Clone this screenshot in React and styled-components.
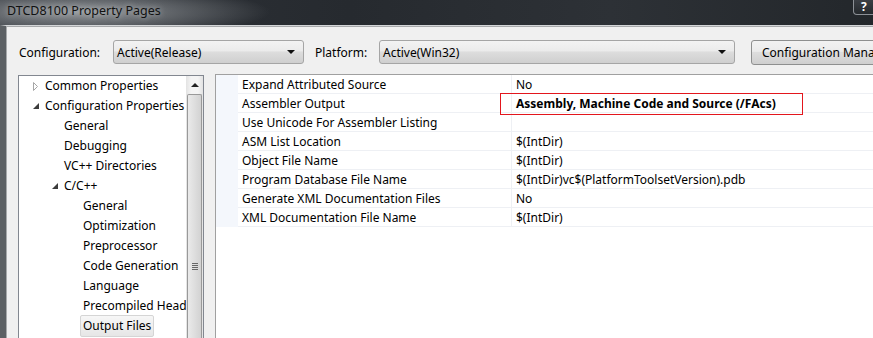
import styled, { createGlobalStyle } from "styled-components";

const GlobalStyle = createGlobalStyle`
    html, body {
        margin: 0;
        padding: 0;
        overflow: hidden;
        background: #f0f0f0;
    }
    body {
        font-family: "Noto Sans", "Liberation Sans", sans-serif;
        font-size: 12px;
        color: #000;
    }
`;

const Window = styled.div`
    width: 873px;
    height: 338px;
    display: flex;
    flex-direction: column;
    overflow: hidden;
`;

const TitleBar = styled.div`
    height: 25px;
    flex: none;
    display: flex;
    align-items: flex-start;
    justify-content: space-between;
    background:
        radial-gradient(ellipse 190px 26px at 80px 12px, rgba(150, 154, 158, 0.95), rgba(150, 154, 158, 0) 100%),
        linear-gradient(to right, #30343a 0%, #262a2f 40%, #2d3136 70%, #23272b 100%);
    overflow: hidden;
`;

const Title = styled.div`
    padding: 2px 0 0 7px;
    font-size: 12.5px;
    color: #111;
    text-shadow: 0 0 6px rgba(220, 222, 224, 0.8);
`;

const HelpButton = styled.div`
    width: 26px;
    height: 15px;
    margin-right: -6px;
    border: 1px solid #8c9096;
    border-top: none;
    border-radius: 0 0 0 4px;
    background: linear-gradient(#3a3e44, #25292d);
    color: #fff;
    font-weight: bold;
    font-size: 12px;
    line-height: 14px;
    padding-left: 7px;
    box-sizing: border-box;
`;

const Frame = styled.div`
    flex: 1;
    display: flex;
    border-top: 1px solid #d4d6d8;
    border-left: 6px solid #5c6064;
`;

const Client = styled.div`
    flex: 1;
    display: flex;
    flex-direction: column;
    background: #f0f0f0;
    border-top: 1px solid #a7a9ab;
    border-left: 1px solid #a7a9ab;
    padding: 13px 0 0 11px;
    min-width: 0;
`;

const TopRow = styled.div`
    display: flex;
    align-items: center;
    height: 24px;
`;

const Label = styled.div`
    width: ${(p) => p.$w}px;
    flex: none;
    padding-left: 1px;
`;

const Combo = styled.div`
    width: ${(p) => p.$w}px;
    flex: none;
    height: 24px;
    box-sizing: border-box;
    border: 1px solid #a5a5a5;
    border-radius: 3px;
    background: linear-gradient(#f3f3f3 0%, #ebebeb 45%, #dddddd 50%, #cfcfcf 100%);
    display: flex;
    align-items: center;
    justify-content: space-between;
    padding: 0 8px 0 3px;
`;

const Arrow = styled.span`
    width: 0;
    height: 0;
    border-left: 4px solid transparent;
    border-right: 4px solid transparent;
    border-top: 4px solid #111;
`;

const Button = styled.div`
    margin-left: ${(p) => p.$gap}px;
    width: 140px;
    flex: none;
    height: 25px;
    box-sizing: border-box;
    border: 1px solid #8e8f8f;
    border-radius: 3px;
    background: linear-gradient(#f2f2f2 0%, #ebebeb 45%, #dddddd 50%, #cfcfcf 100%);
    display: flex;
    align-items: center;
    padding-left: 10px;
    white-space: nowrap;
`;

const Main = styled.div`
    flex: 1;
    display: flex;
    margin-top: 11px;
    min-height: 0;
`;

const TreePanel = styled.div`
    width: 186px;
    flex: none;
    box-sizing: border-box;
    border: 1px solid #828790;
    border-bottom: none;
    background: #fff;
    display: flex;
`;

const TreeList = styled.div`
    flex: 1;
    min-width: 0;
    overflow: hidden;
`;

const TreeRow = styled.div`
    height: 20px;
    display: flex;
    align-items: center;
    padding-left: ${(p) => 14 + p.$level * 19}px;
    white-space: nowrap;
`;

const Twisty = styled.span`
    width: 11px;
    flex: none;
    display: flex;
    align-items: center;
`;

const TreeText = styled.span`
    padding: 1px 2px 2px 2px;
    margin-left: -2px;
    border: 1px solid ${(p) => (p.$selected ? "#d5d5d5" : "transparent")};
    border-radius: 2px;
    background: ${(p) => (p.$selected ? "linear-gradient(#f7f7f7, #e6e6e6)" : "transparent")};
`;

const ScrollBar = styled.div`
    width: 17px;
    flex: none;
    display: flex;
    flex-direction: column;
    background: linear-gradient(to right, #e3e3e3, #f4f4f4 30%, #f4f4f4 70%, #e3e3e3);
`;

const ScrollButton = styled.div`
    height: 17px;
    display: flex;
    align-items: center;
    justify-content: center;
`;

const UpArrow = styled.span`
    width: 0;
    height: 0;
    border-left: 4px solid transparent;
    border-right: 4px solid transparent;
    border-bottom: 4px solid #222;
`;

const Thumb = styled.div`
    flex: 1;
    margin: 1px 1px 0 1px;
    border: 1px solid #999;
    border-bottom: none;
    border-radius: 2px 2px 0 0;
    background: linear-gradient(to right, #eaeaea, #dedede 50%, #d2d2d2);
    display: flex;
    flex-direction: column;
    align-items: center;
    padding-top: 168px;
`;

const Grip = styled.span`
    width: 6px;
    height: 1px;
    margin-bottom: 1px;
    background: #666;
`;

const GridPanel = styled.div`
    flex: 1;
    margin-left: 11px;
    margin-top: -1px;
    background: #fff;
    border-left: 1px solid #a0a0a0;
    border-top: 1px solid #a0a0a0;
    position: relative;
`;

const PropRow = styled.div`
    display: flex;
    height: 19px;
`;

const Gutter = styled.div`
    width: 22px;
    flex: none;
    background: #f4f7fc;
`;

const Cell = styled.div`
    width: ${(p) => (p.$w ? `${p.$w}px` : "auto")};
    flex: ${(p) => (p.$w ? "none" : "1")};
    box-sizing: border-box;
    display: flex;
    align-items: center;
    padding-left: 4px;
    border-bottom: 1px solid #eef0f4;
    border-right: ${(p) => (p.$w ? "1px solid #eef0f4" : "none")};
    font-weight: ${(p) => (p.$bold ? "bold" : "normal")};
    white-space: nowrap;
`;

const Highlight = styled.div`
    position: absolute;
    left: 284px;
    top: 18px;
    width: 303px;
    height: 22px;
    box-sizing: border-box;
    border: 1px solid #e3161d;
`;

const treeItems = [
    { text: "Common Properties", level: 0, twisty: "closed" },
    { text: "Configuration Properties", level: 0, twisty: "open" },
    { text: "General", level: 1 },
    { text: "Debugging", level: 1 },
    { text: "VC++ Directories", level: 1 },
    { text: "C/C++", level: 1, twisty: "open" },
    { text: "General", level: 2 },
    { text: "Optimization", level: 2 },
    { text: "Preprocessor", level: 2 },
    { text: "Code Generation", level: 2 },
    { text: "Language", level: 2 },
    { text: "Precompiled Headers", level: 2 },
    { text: "Output Files", level: 2, selected: true },
];

const props = [
    ["Expand Attributed Source", "No"],
    ["Assembler Output", "Assembly, Machine Code and Source (/FAcs)", true],
    ["Use Unicode For Assembler Listing", ""],
    ["ASM List Location", "$(IntDir)"],
    ["Object File Name", "$(IntDir)"],
    ["Program Database File Name", "$(IntDir)vc$(PlatformToolsetVersion).pdb"],
    ["Generate XML Documentation Files", "No"],
    ["XML Documentation File Name", "$(IntDir)"],
];

function TwistyIcon({ kind }) {
    if (kind === "closed") {
        return (
            <svg width="6" height="9" viewBox="0 0 6 9">
                <path d="M0.5 0.5 L4.5 4.5 L0.5 8.5 Z" fill="#fff" stroke="#a6a6a6" />
            </svg>
        );
    }
    if (kind === "open") {
        return (
            <svg width="6" height="6" viewBox="0 0 6 6">
                <path d="M6 0 L6 6 L0 6 Z" fill="#3c3c3c" />
            </svg>
        );
    }
    return null;
}

function App() {
    return (
        <Window>
            <GlobalStyle />
            <TitleBar>
                <Title>DTCD8100 Property Pages</Title>
                <HelpButton>?</HelpButton>
            </TitleBar>
            <Frame>
                <Client>
                    <TopRow>
                        <Label $w={94}>Configuration:</Label>
                        <Combo $w={191}>
                            <span>Active(Release)</span>
                            <Arrow />
                        </Combo>
                        <Label $w={64} style={{ marginLeft: 10 }}>Platform:</Label>
                        <Combo $w={356}>
                            <span>Active(Win32)</span>
                            <Arrow />
                        </Combo>
                        <Button $gap={16}>Configuration Manager...</Button>
                    </TopRow>
                    <Main>
                        <TreePanel>
                            <TreeList>
                                {treeItems.map((item, i) => (
                                    <TreeRow key={i} $level={item.level}>
                                        <Twisty>
                                            <TwistyIcon kind={item.twisty} />
                                        </Twisty>
                                        <TreeText $selected={item.selected}>{item.text}</TreeText>
                                    </TreeRow>
                                ))}
                            </TreeList>
                            <ScrollBar>
                                <ScrollButton>
                                    <UpArrow />
                                </ScrollButton>
                                <Thumb>
                                    <Grip />
                                    <Grip />
                                    <Grip />
                                    <Grip />
                                </Thumb>
                            </ScrollBar>
                        </TreePanel>
                        <GridPanel>
                            {props.map(([name, value, bold], i) => (
                                <PropRow key={i}>
                                    <Gutter />
                                    <Cell $w={274}>{name}</Cell>
                                    <Cell $bold={bold}>{value}</Cell>
                                </PropRow>
                            ))}
                            <Highlight />
                        </GridPanel>
                    </Main>
                </Client>
            </Frame>
        </Window>
    );
}

export default App;
